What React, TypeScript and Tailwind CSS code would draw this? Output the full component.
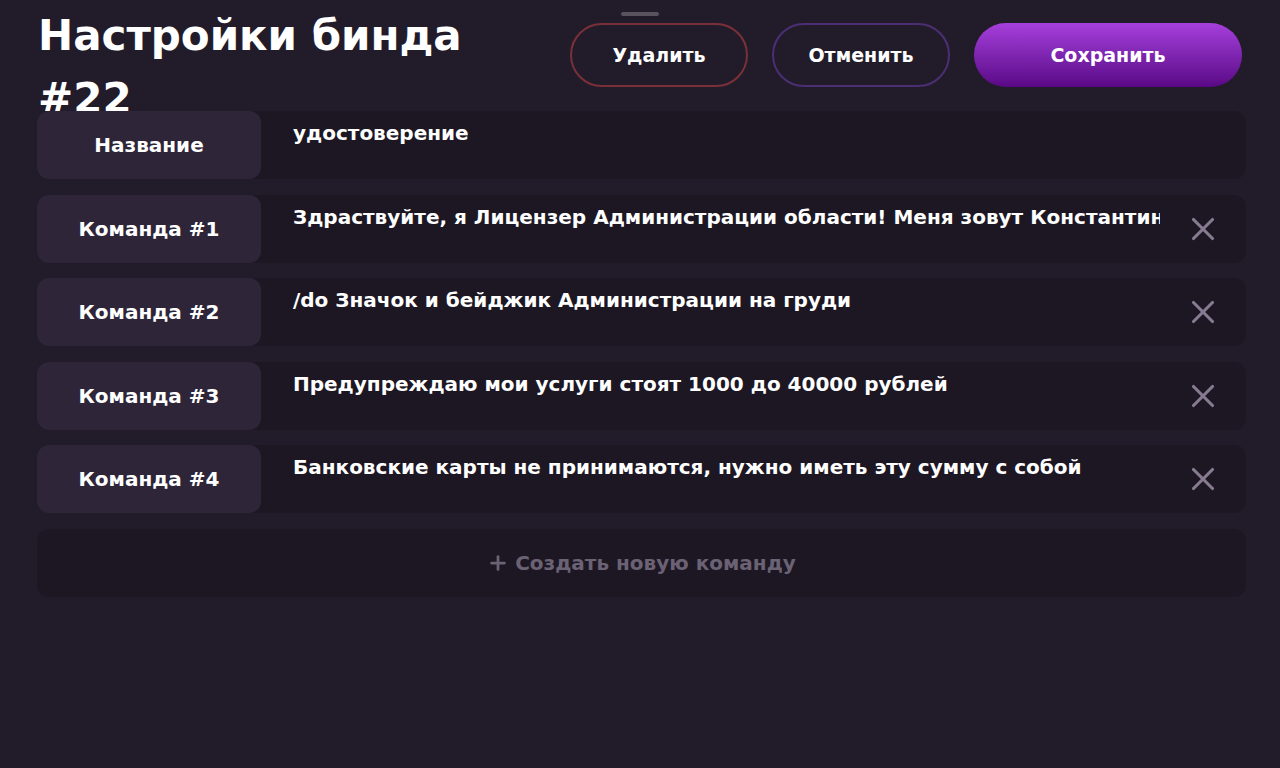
import { X, Plus } from 'lucide-react';

const commands = [
  'Здраствуйте, я Лицензер Администрации области! Меня зовут Константин',
  '/do Значок и бейджик Администрации на груди',
  'Предупреждаю мои услуги стоят 1000 до 40000 рублей',
  'Банковские карты не принимаются, нужно иметь эту сумму с собой',
];

function Row({ label, value, removable }: { label: string; value: string; removable?: boolean }) {
  return (
    <div className="flex h-[68px] rounded-[12px] bg-[#1d1724]">
      <div className="flex w-[224px] shrink-0 items-center justify-center rounded-[12px] bg-[#2e2539] text-[20px] font-bold text-white">
        {label}
      </div>
      <div className="min-w-0 flex-1 overflow-hidden whitespace-nowrap pl-[32px] pt-[8px] text-[20px] font-bold leading-7 text-white">
        {value}
      </div>
      {removable && (
        <div className="flex w-[86px] shrink-0 items-center justify-center">
          <X className="h-[38px] w-[38px] text-[#867b90]" strokeWidth={2} />
        </div>
      )}
    </div>
  );
}

export default function App() {
  return (
    <div
      className="relative min-h-[768px] w-full overflow-hidden bg-[#221c2a] pl-[37px] pr-[34px]"
      style={{ fontFamily: '"DejaVu Sans", "Open Sans", sans-serif' }}
    >
      <div className="absolute left-1/2 top-[12px] h-[4px] w-[38px] -translate-x-1/2 rounded-full bg-[#58525f]" />

      <div className="flex h-[111px] items-start justify-between">
        <h1 className="w-[470px] pt-[4px] pl-[1px] text-[42px] font-bold leading-[63px] text-white">Настройки бинда #22</h1>
        <div className="flex gap-[24px] pt-[23px] pr-[4px]">
          <button className="h-[64px] w-[178px] rounded-full border-2 border-[#7a3039] text-[19px] font-bold text-white">
            Удалить
          </button>
          <button className="h-[64px] w-[178px] rounded-full border-2 border-[#4c2e74] text-[19px] font-bold text-white">
            Отменить
          </button>
          <button className="h-[64px] w-[268px] rounded-full bg-gradient-to-b from-[#a63fdc] to-[#5a0787] text-[19px] font-bold text-white">
            Сохранить
          </button>
        </div>
      </div>

      <div className="relative z-10 flex flex-col gap-[15.6px] bg-[#221c2a]">
        <Row label="Название" value="удостоверение" />
        {commands.map((c, i) => (
          <Row key={i} label={`Команда #${i + 1}`} value={c} removable />
        ))}
        <div className="flex h-[68px] items-center justify-center gap-[6px] rounded-[12px] bg-[#1d1724] text-[20px] font-bold text-[#6b6274]">
          <Plus className="h-[22px] w-[22px]" strokeWidth={3} />
          Создать новую команду
        </div>
      </div>
    </div>
  );
}
